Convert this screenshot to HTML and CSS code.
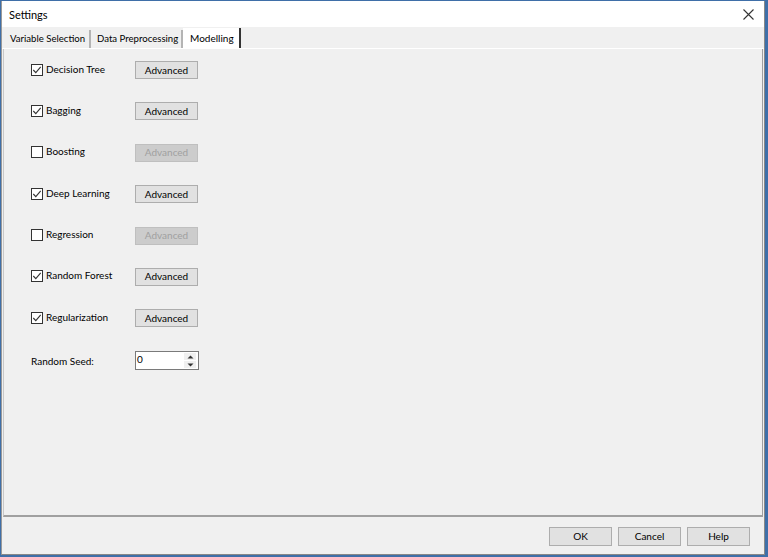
FILE: index.html
```html
<!DOCTYPE html>
<html>
<head>
<meta charset="utf-8">
<link rel="stylesheet" href="styles.css">
</head>
<body>
<div class="dialog">
  <div class="titlebar">
    <span class="title">Settings</span>
    <svg class="close" width="11" height="11" viewBox="0 0 11 11"><path d="M0.5 0.5 L10.5 10.5 M10.5 0.5 L0.5 10.5" stroke="#333" stroke-width="1.1" fill="none"/></svg>
  </div>
  <div class="tabs">
    <div class="tab t1">Variable Selection</div>
    <div class="tab t2">Data Preprocessing</div>
    <div class="tab active">Modelling</div>
  </div>
  <div class="pane">
    <div class="row"><span class="cb on"><svg width="10" height="10" viewBox="0 0 10 10"><path d="M1.3 5 L3.8 7.6 L8.7 1.8" stroke="#333" stroke-width="1.1" fill="none"/></svg></span><span class="lbl">Decision Tree</span><button class="btn">Advanced</button></div>
    <div class="row"><span class="cb on"><svg width="10" height="10" viewBox="0 0 10 10"><path d="M1.3 5 L3.8 7.6 L8.7 1.8" stroke="#333" stroke-width="1.1" fill="none"/></svg></span><span class="lbl">Bagging</span><button class="btn">Advanced</button></div>
    <div class="row"><span class="cb"></span><span class="lbl">Boosting</span><button class="btn disabled">Advanced</button></div>
    <div class="row"><span class="cb on"><svg width="10" height="10" viewBox="0 0 10 10"><path d="M1.3 5 L3.8 7.6 L8.7 1.8" stroke="#333" stroke-width="1.1" fill="none"/></svg></span><span class="lbl">Deep Learning</span><button class="btn">Advanced</button></div>
    <div class="row"><span class="cb"></span><span class="lbl">Regression</span><button class="btn disabled">Advanced</button></div>
    <div class="row"><span class="cb on"><svg width="10" height="10" viewBox="0 0 10 10"><path d="M1.3 5 L3.8 7.6 L8.7 1.8" stroke="#333" stroke-width="1.1" fill="none"/></svg></span><span class="lbl">Random Forest</span><button class="btn">Advanced</button></div>
    <div class="row"><span class="cb on"><svg width="10" height="10" viewBox="0 0 10 10"><path d="M1.3 5 L3.8 7.6 L8.7 1.8" stroke="#333" stroke-width="1.1" fill="none"/></svg></span><span class="lbl">Regularization</span><button class="btn">Advanced</button></div>
    <div class="row seed"><span class="seedlbl">Random Seed:</span>
      <div class="spin">
        <span class="val">0</span>
        <div class="arrows">
          <span class="arr"><svg width="7" height="4" viewBox="0 0 7 4"><path d="M0.5 3.5 L3.5 0.5 L6.5 3.5 Z" fill="#333"/></svg></span>
          <span class="arr"><svg width="7" height="4" viewBox="0 0 7 4"><path d="M0.5 0.5 L3.5 3.5 L6.5 0.5 Z" fill="#333"/></svg></span>
        </div>
      </div>
    </div>
  </div>
  <div class="footer">
    <button class="btn fbtn">OK</button>
    <button class="btn fbtn">Cancel</button>
    <button class="btn fbtn">Help</button>
  </div>
</div>
</body>
</html>
```

FILE: styles.css
```css
html, body {
  margin: 0;
  padding: 0;
}
body {
  width: 768px;
  height: 557px;
  background: #3f6fa8;
  font-family: Lato, "Noto Sans", "Liberation Sans", sans-serif;
  font-size: 10px;
  color: #000;
  overflow: hidden;
  padding-top: 1px;
  box-sizing: border-box;
}
.dialog {
  width: 762px;
  height: 553px;
  margin-left: 1px;
  background: #f0f0f0;
  border-right: 1px solid #888;
  border-left: 1px solid #9a9a9a;
  border-bottom: 1px solid #888;
  display: flex;
  flex-direction: column;
  box-sizing: content-box;
}
.titlebar {
  height: 26px;
  background: #fff;
  display: flex;
  align-items: center;
  justify-content: space-between;
  padding: 0 10px 0 7px;
}
.title {
  font-size: 11px;
}
.close {
  display: block;
}
.tabs {
  height: 21px;
  display: flex;
  align-items: flex-end;
  padding-left: 2px;
  border-bottom: 1px solid #fff;
}
.tab {
  height: 18px;
  line-height: 18px;
  border-right: 2px solid #b4b4b4;
  background: #f0f0f0;
  box-sizing: border-box;
  white-space: nowrap;
  font-size: 9.6px;
}
.t1 {
  width: 87px;
  padding-left: 6px;
}
.t2 {
  width: 92px;
  padding-left: 6px;
}
.tab.active {
  height: 20px;
  line-height: 21px;
  width: 58px;
  background: #fff;
  border-right: 2px solid #333;
  padding-left: 7px;
  font-size: 10px;
}
.pane {
  flex: 1;
  margin: 0 1px 0 1px;
  border-right: 1px solid #a0a0a0;
  border-bottom: 2px solid #a0a0a0;
  border-left: 1px solid #c8c8c8;
  padding: 12px 0 0 27px;
  display: flex;
  flex-direction: column;
  gap: 23.4px;
}
.row {
  height: 18px;
  display: flex;
  align-items: center;
}
.cb {
  width: 10px;
  height: 10px;
  border: 1px solid #333;
  background: #fff;
  display: flex;
  align-items: center;
  justify-content: center;
  margin-top: -1px;
}
.cb svg {
  display: block;
}
.lbl {
  margin-left: 3px;
  width: 89px;
  margin-top: -3px;
  white-space: nowrap;
}
.btn {
  font-family: inherit;
  font-size: 10px;
  width: 63px;
  height: 18px;
  padding: 0;
  margin: 0;
  background: #e1e1e1;
  border: 1px solid #adadad;
  color: #000;
  line-height: 15px;
}
.btn.disabled {
  background: #cccccc;
  border-color: #bfbfbf;
  color: #a0a0a0;
}
.seed {
  height: 19px;
  margin-top: 0.6px;
}
.seedlbl {
  width: 104px;
  margin-left: 0;
}
.spin {
  width: 62px;
  height: 17px;
  border: 1px solid #7a7a7a;
  background: #fff;
  display: flex;
  justify-content: space-between;
}
.val {
  padding-left: 1px;
  line-height: 15px;
}
.arrows {
  width: 12px;
  margin: 1px 2px 1px 0;
  display: flex;
  flex-direction: column;
  gap: 1px;
}
.arr {
  flex: 1;
  background: #f0f0f0;
  display: flex;
  align-items: center;
  justify-content: center;
}
.arr svg {
  display: block;
}
.footer {
  height: 37px;
  display: flex;
  justify-content: flex-end;
  align-items: flex-start;
  padding: 10px 14px 0 0;
  box-sizing: border-box;
  gap: 6px;
}
.fbtn {
  height: 19px;
}
```
